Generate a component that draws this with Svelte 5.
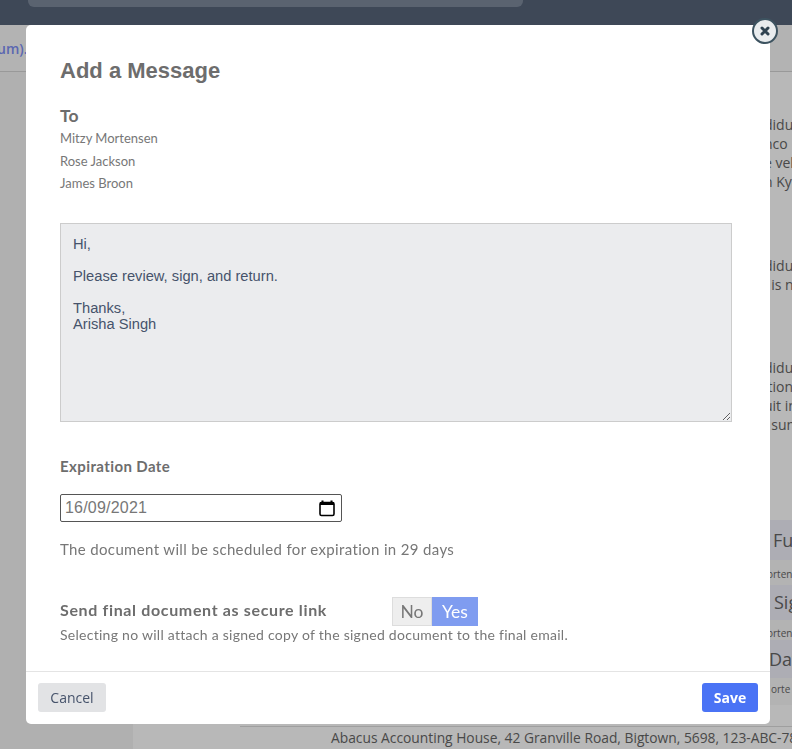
<script lang="ts">
  const recipients = ["Mitzy Mortensen", "Rose Jackson", "James Broon"];

  // bits of the page behind the modal, only the right edge of them shows
  const paragraphs = [
    { top: 22, lines: ["didu", "nco", "e vel", "n Ky"] },
    { top: 65, lines: ["didu", "\u00a0\u00a0is ni"] },
    { top: 64, lines: ["didu", "ition", "uit in", "\u00a0\u00a0sun"] }
  ];

  const rows = [
    { head: "Ful", headH: 40, headPad: 9, cell: "orten", cellH: 25, cellLine: 28, cellPad: 3 },
    { head: "Sig", headH: 35, headPad: 10, cell: "orten", cellH: 20, cellLine: 26, cellPad: 3 },
    { head: "Dat", headH: 38, headPad: 5, cell: "orte", cellH: 27, cellLine: 22, cellPad: 7 }
  ];

  let secureLink = $state(true);
  let message = $state("Hi,\n\nPlease review, sign, and return.\n\nThanks,\nArisha Singh");
</script>

<div class="page">
  <header class="topbar">
    <div class="search"></div>
  </header>
  <div class="subbar"><span class="crumb">um).</span></div>
  <div class="body">
    <aside class="sidebar"></aside>
    <main class="doc">
      <div class="doc-text">
        {#each paragraphs as p}
          <div class="para" style="margin-top: {p.top}px">
            {#each p.lines as line}
              <div>{line}</div>
            {/each}
          </div>
        {/each}
      </div>
      <div class="table">
        {#each rows as row}
          <div class="table-head" style="height: {row.headH}px; line-height: {row.headH}px; padding-left: {row.headPad}px">{row.head}</div>
          <div class="table-cell" style="height: {row.cellH}px; line-height: {row.cellLine}px; padding-left: {row.cellPad}px">{row.cell}</div>
        {/each}
      </div>
      <div class="address">Abacus Accounting House, 42 Granville Road, Bigtown, 5698, 123-ABC-789</div>
    </main>
  </div>
</div>

<div class="overlay"></div>

<div class="modal">
  <button class="close" aria-label="Close">
    <svg viewBox="0 0 16 16" width="12" height="12">
      <path d="M4 4 L12 12 M12 4 L4 12" stroke="#2f4250" stroke-width="4" stroke-linecap="round" />
    </svg>
  </button>

  <div class="content">
    <h2>Add a Message</h2>

    <div class="to">
      <div class="to-label">To</div>
      {#each recipients as name}
        <div class="recipient">{name}</div>
      {/each}
    </div>

    <textarea class="message" bind:value={message}></textarea>

    <div class="field-label">Expiration Date</div>
    <div class="date">
      <span>16/09/2021</span>
      <svg viewBox="0 0 18 18" width="18" height="18">
        <path d="M4.5 1.5v2M13.5 1.5v2" stroke="#000" stroke-width="2" />
        <rect x="2" y="3.5" width="14" height="13" rx="1.5" fill="none" stroke="#000" stroke-width="1.6" />
        <rect x="2" y="3" width="14" height="3" fill="#000" />
      </svg>
    </div>
    <p class="hint">The document will be scheduled for expiration in 29 days</p>

    <div class="secure">
      <div class="secure-label">Send final document as secure link</div>
      <div class="toggle">
        <button class="toggle-no" class:on={!secureLink} onclick={() => (secureLink = false)}>No</button>
        <button class="toggle-yes" class:on={secureLink} onclick={() => (secureLink = true)}>Yes</button>
      </div>
    </div>
    <p class="secure-note">Selecting no will attach a signed copy of the signed document to the final email.</p>
  </div>

  <footer class="footer">
    <button class="btn cancel">Cancel</button>
    <button class="btn save">Save</button>
  </footer>
</div>

<style>
  :global(body) {
    margin: 0;
    overflow: hidden;
    font-family: Lato, "Open Sans", sans-serif;
  }

  .page {
    height: 749px;
    display: flex;
    flex-direction: column;
    overflow: hidden;
    background: #fff;
  }

  .topbar {
    height: 25px;
    flex: none;
    background: #566479;
    padding: 0 269px 0 28px;
  }

  .search {
    height: 7px;
    background: #7d899c;
    border-radius: 0 0 6px 6px;
  }

  .subbar {
    height: 47px;
    flex: none;
    box-sizing: border-box;
    border-bottom: 1px solid #d5d5d5;
    background: #f9f9f9;
    display: flex;
    align-items: center;
  }

  .crumb {
    color: #7f8ff5;
    font: 600 14px "Open Sans", sans-serif;
    margin: 0 0 0 -3px;
  }

  .body {
    flex: 1;
    display: flex;
    min-height: 0;
  }

  .sidebar {
    width: 133px;
    flex: none;
    background: #f4f4f4;
  }

  .doc {
    flex: 1;
    min-width: 0;
    font: 14px/19px "Open Sans", sans-serif;
    color: #666;
    overflow: hidden;
    white-space: nowrap;
    background: #fff;
  }

  .doc-text {
    margin-left: 631px;
    padding-top: 21px;
    height: 448px;
    box-sizing: border-box;
  }

  .para {
    overflow: hidden;
  }

  .table {
    margin-left: 631px;
  }

  .table-head {
    font-size: 18px;
    background: #f0f0fa;
  }

  .table-cell {
    font-size: 10px;
    background: #f9f9f9;
    overflow: hidden;
  }

  .address {
    margin: 21px 0 0 107px;
    padding-left: 91px;
    border-top: 1px solid #ddd;
    font-size: 13.8px;
    line-height: 21px;
  }

  .overlay {
    position: fixed;
    inset: 0;
    background: rgba(0, 0, 0, 0.28);
  }

  .modal {
    position: fixed;
    left: 26px;
    top: 25px;
    width: 744px;
    height: 699px;
    background: #fff;
    border-radius: 5px;
    display: flex;
    flex-direction: column;
    color: #777;
  }

  .close {
    position: absolute;
    top: -7px;
    right: -8px;
    width: 26px;
    height: 26px;
    box-sizing: border-box;
    border-radius: 50%;
    border: 2px solid #3d5360;
    background: #e9ecee;
    padding: 0;
    display: flex;
    align-items: center;
    justify-content: center;
  }

  .content {
    flex: 1;
    padding: 0 38px 0 34px;
  }

  h2 {
    margin: 32px 0 0;
    font: bold 22px/27px "Liberation Sans", sans-serif;
    color: #6d6d6d;
  }

  .to {
    margin-top: 22px;
  }

  .to-label {
    font-size: 17.5px;
    font-weight: 700;
    line-height: 19px;
    margin-bottom: 2px;
    color: #6d6d6d;
  }

  .recipient {
    font-size: 13px;
    line-height: 22.5px;
  }

  .message {
    display: block;
    box-sizing: border-box;
    width: 672px;
    height: 199px;
    margin-top: 28px;
    padding: 12px;
    border: 1px solid #ccc;
    background: #ebecee;
    color: #46536b;
    font: 14.7px/16px "Liberation Sans", sans-serif;
    outline: none;
  }

  .field-label {
    margin-top: 36px;
    font-size: 15px;
    letter-spacing: 0.4px;
    font-weight: 700;
    line-height: 17px;
    color: #6d6d6d;
  }

  .date {
    margin-top: 19px;
    width: 282px;
    height: 28px;
    box-sizing: border-box;
    border: 1px solid #555;
    border-radius: 2px;
    display: flex;
    align-items: center;
    justify-content: space-between;
    padding: 0 5px 0 4px;
    font: 16px "Liberation Sans", sans-serif;
    letter-spacing: 0.2px;
    color: #777;
  }

  .hint {
    margin: 18px 0 0;
    font-size: 15px;
    letter-spacing: 0.35px;
    line-height: 18px;
  }

  .secure {
    margin-top: 40px;
    display: flex;
    align-items: center;
    height: 28px;
  }

  .secure-label {
    width: 332px;
    margin-bottom: 4px;
    font-size: 16px;
    letter-spacing: 0.65px;
    font-weight: 700;
    color: #6d6d6d;
  }

  .toggle {
    display: flex;
  }

  .toggle button {
    height: 29px;
    padding: 0;
    border: 1px solid #ddd;
    background: #eee;
    color: #777;
    font: 17.5px Lato, sans-serif;
  }

  .toggle-no {
    width: 40px;
  }

  .toggle .toggle-yes {
    width: 46px;
    border-color: #7f9cf0;
    background: #7f9cf0;
    color: #fff;
  }

  .secure-note {
    margin: 1px 0 0;
    font-size: 14px;
    letter-spacing: 0.27px;
    line-height: 16px;
  }

  .footer {
    height: 53px;
    flex: none;
    box-sizing: border-box;
    border-top: 1px solid #e4e4e4;
    padding: 11px 12px 0;
    display: flex;
    justify-content: space-between;
    align-items: flex-start;
  }

  .btn {
    height: 29px;
    border: 0;
    border-radius: 3px;
    font: 14px "Open Sans", sans-serif;
    padding: 0;
  }

  .cancel {
    width: 68px;
    background: #e2e3e5;
    color: #46536b;
  }

  .save {
    width: 56px;
    background: #4a73f5;
    color: #fff;
    font-weight: 700;
  }
</style>
